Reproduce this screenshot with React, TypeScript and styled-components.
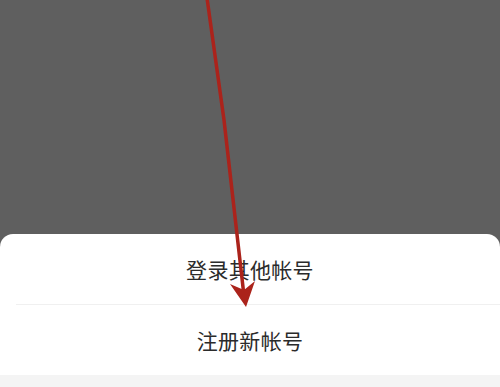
import React from "react";
import styled, { createGlobalStyle } from "styled-components";

const GlobalStyle = createGlobalStyle`
  html, body {
    margin: 0;
    padding: 0;
    width: 500px;
    height: 387px;
    overflow: hidden;
    background: #5f5f5f;
  }
  #root {
    height: 100%;
  }
`;

const Screen = styled.div`
  position: relative;
  width: 500px;
  height: 387px;
  background: #5f5f5f;
  display: flex;
  flex-direction: column;
  justify-content: flex-end;
  font-family: "Noto Sans CJK SC", "Noto Sans", sans-serif;
`;

const Sheet = styled.div`
  background: #ffffff;
  border-radius: 13px 13px 0 0;
  display: flex;
  flex-direction: column;
`;

const Option = styled.div<{ $divider?: boolean }>`
  height: 70px;
  display: flex;
  align-items: center;
  justify-content: center;
  font-size: 21px;
  color: #2b2b2b;
  letter-spacing: 0.3px;
  margin-left: 16px;
  padding-right: 16px;
  border-bottom: ${(p) => (p.$divider ? "1px solid #f0f0f0" : "none")};
`;

const Gap = styled.div`
  height: 12px;
  background: #f4f4f4;
`;

const Arrow = styled.svg`
  position: absolute;
  left: 0;
  top: 0;
  pointer-events: none;
`;

export default function App() {
  return (
    <>
      <GlobalStyle />
      <Screen>
        <Sheet>
          <Option $divider>登录其他帐号</Option>
          <Option>注册新帐号</Option>
          <Gap />
        </Sheet>
        <Arrow width="500" height="387" viewBox="0 0 500 387">
          <path
            d="M207 -2 L224 120 L244 296"
            fill="none"
            stroke="#ab231b"
            strokeWidth="3.5"
            strokeLinecap="round"
          />
          <path d="M230 284 L244 290 L255 281 L246 307 Z" fill="#ab231b" />
        </Arrow>
      </Screen>
    </>
  );
}
